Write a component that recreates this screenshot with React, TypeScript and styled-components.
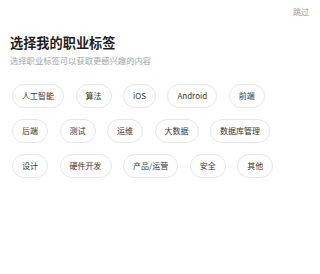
import React from "react";
import styled, { createGlobalStyle } from "styled-components";

const Global = createGlobalStyle`
  html, body { margin: 0; padding: 0; background: #fff; }
  body { font-family: "Noto Sans CJK SC", "Liberation Sans", sans-serif; }
`;

const Page = styled.div`
  width: 320px;
  height: 274px;
  box-sizing: border-box;
  padding: 0 10px;
  display: flex;
  flex-direction: column;
`;

const TopBar = styled.div`
  display: flex;
  justify-content: flex-end;
  padding-top: 6px;
  padding-right: 1px;
  height: 24px;
  box-sizing: border-box;
`;

const Skip = styled.span`
  font-size: 8px;
  line-height: 12px;
  color: #9a9a9a;
`;

const Title = styled.h1`
  margin: 10px 0 0 0;
  font-size: 13.2px;
  line-height: 18px;
  font-weight: 700;
  color: #1f1f1f;
`;

const Subtitle = styled.p`
  margin: 2px 0 0 0;
  font-size: 8.3px;
  line-height: 12px;
  color: #a3a3a3;
`;

const TagList = styled.div`
  margin-top: 18px;
  padding-left: 2px;
  display: flex;
  flex-direction: column;
  gap: 11px;
`;

const TagRow = styled.div`
  display: flex;
  gap: 11.5px;
`;

const Tag = styled.button<{ $selected?: boolean }>`
  height: 24px;
  box-sizing: border-box;
  padding: 0 9px;
  border-radius: 12px;
  border: 1px solid #e6e6e6;
  background: #fff;
  color: #333;
  font-family: inherit;
  font-size: 8px;
  line-height: 22px;
  white-space: nowrap;
  cursor: pointer;
`;

const rows = [
  ["人工智能", "算法", "iOS", "Android", "前端"],
  ["后端", "测试", "运维", "大数据", "数据库管理"],
  ["设计", "硬件开发", "产品/运营", "安全", "其他"],
];

export default function App() {
  return (
    <>
      <Global />
      <Page>
        <TopBar>
          <Skip>跳过</Skip>
        </TopBar>
        <Title>选择我的职业标签</Title>
        <Subtitle>选择职业标签可以获取更感兴趣的内容</Subtitle>
        <TagList>
          {rows.map((r, i) => (
            <TagRow key={i}>
              {r.map((t) => (
                <Tag key={t}>{t}</Tag>
              ))}
            </TagRow>
          ))}
        </TagList>
      </Page>
    </>
  );
}
